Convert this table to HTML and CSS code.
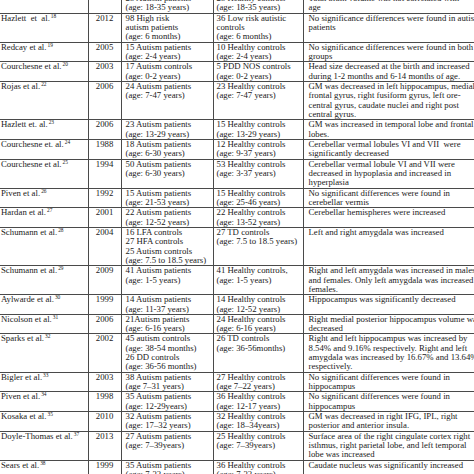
FILE: index.html
```html
<!DOCTYPE html>
<html>
<head>
<meta charset="utf-8">
<link rel="stylesheet" href="styles.css">
</head>
<body>
<div class="page">
<table class="data">
<colgroup>
<col class="c-author"><col class="c-year"><col class="c-pat"><col class="c-ctl"><col class="c-find">
</colgroup>
<tbody>
<tr><td class="author"></td><td class="year"></td><td class="pat">25 Autism patients<br>(age: 18-35 years)</td><td class="ctl">25 Healthy controls<br>(age: 18-35 years)</td><td class="find">Total brain volume was not correlated with<br>age</td></tr>
<tr><td class="author">Hazlett&nbsp; et&nbsp; al.<sup class="ref">18</sup></td><td class="year">2012</td><td class="pat">98 High risk<br>autism patients<br>(age: 6 months)</td><td class="ctl">36 Low risk autistic<br>controls<br>(age: 6 months)</td><td class="find">No significance differences were found in autism<br>patients</td></tr>
<tr><td class="author">Redcay et al.<sup class="ref">19</sup></td><td class="year">2005</td><td class="pat">15 Autism patients<br>(age: 2-4 years)</td><td class="ctl">10 Healthy controls<br>(age: 2-4 years)</td><td class="find">No significance differences were found in both<br>groups</td></tr>
<tr><td class="author">Courchesne et al.<sup class="ref">20</sup></td><td class="year">2003</td><td class="pat">17 Autism controls<br>(age: 0-2 years)</td><td class="ctl">5 PDD NOS controls<br>(age: 0-2 years)</td><td class="find">Head size decreased at the birth and increased<br>during 1-2 months and 6-14 months of age.</td></tr>
<tr><td class="author">Rojas et al.<sup class="ref">22</sup></td><td class="year">2006</td><td class="pat">24 Autism patients<br>(age: 7-47 years)</td><td class="ctl">23 Healthy controls<br>(age: 7-47 years)</td><td class="find">GM was decreased in left hippocampus, medial<br>frontal gyrus, right fusiform gyrus, left ore-<br>central gyrus, caudate nuclei and right post<br>central gyrus.</td></tr>
<tr><td class="author">Hazlett et. al.<sup class="ref">23</sup></td><td class="year">2006</td><td class="pat">23 Autism patients<br>(age: 13-29 years)</td><td class="ctl">15 Healthy controls<br>(age: 13-29 years)</td><td class="find">GM was increased in temporal lobe and frontal<br>lobes.</td></tr>
<tr><td class="author">Courchesne et. al.<sup class="ref">24</sup></td><td class="year">1988</td><td class="pat">18 Autism patients<br>(age: 6-30 years)</td><td class="ctl">12 Healthy controls<br>(age: 9-37 years)</td><td class="find">Cerebellar vermal lobules VI and VII&nbsp; were<br>significantly decreased</td></tr>
<tr><td class="author">Courchesne et al.<sup class="ref">25</sup></td><td class="year">1994</td><td class="pat">50 Autism patients<br>(age: 6-30 years)</td><td class="ctl">53 Healthy controls<br>(age: 3-37 years)</td><td class="find">Cerebellar vermal lobule VI and VII were<br>decreased in hypoplasia and increased in<br>hyperplasia</td></tr>
<tr><td class="author">Piven et al.<sup class="ref">26</sup></td><td class="year">1992</td><td class="pat">15 Autism patients<br>(age: 21-53 years)</td><td class="ctl">15 Healthy controls<br>(age: 25-46 years)</td><td class="find">No significant differences were found in<br>cerebellar vermis</td></tr>
<tr><td class="author">Hardan et al.<sup class="ref">27</sup></td><td class="year">2001</td><td class="pat">22 Autism patients<br>(age: 12-52 years)</td><td class="ctl">22 Healthy controls<br>(age: 13-52 years)</td><td class="find">Cerebellar hemispheres were increased</td></tr>
<tr><td class="author">Schumann et al.<sup class="ref">28</sup></td><td class="year">2004</td><td class="pat">16 LFA controls<br>27 HFA controls<br>25 Autism controls<br>(age: 7.5 to 18.5 years)</td><td class="ctl">27 TD controls<br>(age: 7.5 to 18.5 years)</td><td class="find">Left and right amygdala was increased</td></tr>
<tr><td class="author">Schumann et al.<sup class="ref">29</sup></td><td class="year">2009</td><td class="pat">41 Autism patients<br>(age: 1-5 years)</td><td class="ctl">41 Healthy controls,<br>(age: 1-5 years)</td><td class="find">Right and left amygdala was increased in males<br>and females. Only left amygdala was increased in<br>females.</td></tr>
<tr><td class="author">Aylwarde et al.<sup class="ref">30</sup></td><td class="year">1999</td><td class="pat">14 Autism patients<br>(age: 11-37 years)</td><td class="ctl">14 Healthy controls<br>(age: 12-52 years)</td><td class="find">Hippocampus was significantly decreased</td></tr>
<tr><td class="author">Nicolson et al.<sup class="ref">31</sup></td><td class="year">2006</td><td class="pat">21Autism patients<br>(age: 6-16 years)</td><td class="ctl">24 Healthy controls<br>(age: 6-16 years)</td><td class="find">Right medial posterior hippocampus volume was<br>decreased</td></tr>
<tr><td class="author">Sparks et al.<sup class="ref">32</sup></td><td class="year">2002</td><td class="pat">45 autism controls<br>(age: 38-54 months)<br>26 DD controls<br>(age: 36-56 months)</td><td class="ctl">26 TD controls<br>(age: 36-56months)</td><td class="find">Right and left hippocampus was increased by<br>8.54% and 9.16% respectively. Right and left<br>amygdala was increased by 16.67% and 13.64%<br>respectively.</td></tr>
<tr><td class="author">Bigler et al.<sup class="ref">33</sup></td><td class="year">2003</td><td class="pat">38 Autism patients<br>(age 7–31 years)</td><td class="ctl">27 Healthy controls<br>(age 7–22 years)</td><td class="find">No significant differences were found in<br>hippocampus</td></tr>
<tr><td class="author">Piven et al.<sup class="ref">34</sup></td><td class="year">1998</td><td class="pat">35 Autism patients<br>(age: 12-29years)</td><td class="ctl">36 Healthy controls<br>(age: 12-17 years)</td><td class="find">No significant differences were found in<br>hippocampus</td></tr>
<tr><td class="author">Kosaka et al.<sup class="ref">35</sup></td><td class="year">2010</td><td class="pat">32 Autism patients<br>(age: 17–32 years)</td><td class="ctl">32 Healthy controls<br>(age: 18–34years)</td><td class="find">GM was decreased in right IFG, IPL, right<br>posterior and anterior insula.</td></tr>
<tr><td class="author">Doyle-Thomas et al.<sup class="ref">37</sup></td><td class="year">2013</td><td class="pat">27 Autism patients<br>(age: 7–39years)</td><td class="ctl">25 Healthy controls<br>(age: 7–39years)</td><td class="find">Surface area of the right cingulate cortex right<br>isthmus, right parietal lobe, and left temporal<br>lobe was increased</td></tr>
<tr><td class="author">Sears et al.<sup class="ref">38</sup></td><td class="year">1999</td><td class="pat">35 Autism patients<br>(age: 7-32 years)</td><td class="ctl">36 Healthy controls<br>(age: 7-32 years)</td><td class="find">Caudate nucleus was significantly increased</td></tr>
</tbody>
</table>
</div>
</body>
</html>
```

FILE: styles.css
```css
html, body {
  margin: 0;
  padding: 0;
  background: #ffffff;
  overflow: hidden;
}

.page {
  width: 474px;
  height: 474px;
  overflow: hidden;
  background: #ffffff;
}

.data {
  border-collapse: collapse;
  table-layout: fixed;
  width: 600px;
  margin: -7px 0 0 0;
  font-family: "Liberation Serif", "Times New Roman", serif;
  font-size: 8.75px;
  line-height: 9.33px;
  color: #1a1a1a;
}

.c-author { width: 88px; }
.c-year { width: 33px; }
.c-pat { width: 92px; }
.c-ctl { width: 90px; }
.c-find { width: 297px; }

.data td {
  border: 1px solid #4a4a4a;
  padding: 0 0 0 3px;
  vertical-align: top;
  white-space: nowrap;
  overflow: hidden;
}

.data td.author {
  border-left: none;
  padding-left: 1px;
}

.data td.year {
  text-align: center;
  padding-left: 0;
}

.data td.pat {
  padding-left: 4px;
}

.data td.ctl {
  padding-left: 3px;
}

.data td.find {
  padding-left: 5px;
}

.ref {
  font-size: 5.4px;
  line-height: 0;
  vertical-align: 3px;
  margin-left: 1px;
}
```
